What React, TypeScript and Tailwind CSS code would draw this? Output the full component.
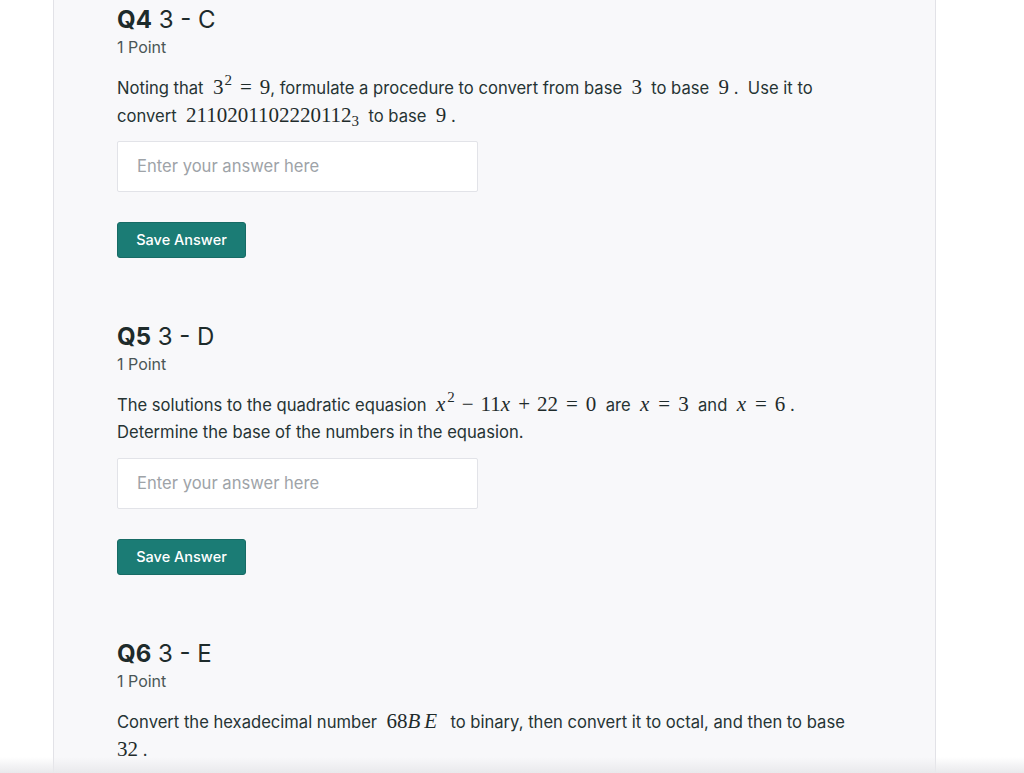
import React from "react";

const M = ({ children }: { children: React.ReactNode }) => (
  <span
    className="text-[21px] text-[#1f2b2b]"
    style={{ fontFamily: '"Liberation Serif", "DejaVu Serif", serif' }}
  >
    {children}
  </span>
);

const Rel = ({ children }: { children: React.ReactNode }) => (
  <span className="mx-[8px]">{children}</span>
);
const Bin = ({ children }: { children: React.ReactNode }) => (
  <span className="mx-[7px]">{children}</span>
);
const V = ({ children }: { children: React.ReactNode }) => (
  <i className="tracking-[1px]">{children}</i>
);

const Sup = ({ children }: { children: React.ReactNode }) => (
  <sup className="text-[15px] relative -top-[9px] ml-[1px]">{children}</sup>
);

function Question({
  num,
  title,
  children,
  last = false,
}: {
  num: string;
  title: string;
  children: React.ReactNode;
  last?: boolean;
}) {
  return (
    <section className="flex flex-col">
      <h2 className="text-[24px] leading-[30px] text-[#1e2b2b]">
        <span className="font-bold">{num}</span> {title}
      </h2>
      <div className="text-[16px] leading-[24px] text-[#4a5656]">1 Point</div>
      <div className="mt-[15px] h-[54px] text-[16.6px] leading-[27px] text-[#263434] whitespace-nowrap">{children}</div>
      <div className="mt-[13px] w-[361px] h-[51px] bg-white border border-[#e2e3e8] rounded-[2px] flex items-center pl-[19px] text-[16.6px] text-[#9ea3a8]">
        Enter your answer here
      </div>
      {!last && (
        <button className="mt-[30px] w-[129px] h-[36px] rounded-[3px] bg-[#1b7c75] border border-[#176b65] text-white text-[14.5px] font-medium">
          Save Answer
        </button>
      )}
    </section>
  );
}

export default function App() {
  return (
    <div
      className="relative h-[773px] w-[1024px] overflow-hidden bg-white"
      style={{ fontFamily: 'Inter, "Noto Sans", sans-serif' }}
    >
      <div className="ml-[53px] w-[883px] h-full bg-[#f8f8fa] border-x border-[#e2e2e7] pl-[63px] pt-[5px] flex flex-col gap-[64px]">
        <Question num="Q4" title="3 - C">
          Noting that&nbsp; <M>3<Sup>2</Sup><Rel>=</Rel>9</M>, formulate a procedure to
          convert from base&nbsp; <M>3</M>&nbsp; to base&nbsp; <M>9</M>&nbsp;. &nbsp;Use it to
          <br />
          convert&nbsp; <M>2110201102220112<sub className="text-[15px]">3</sub></M>&nbsp; to base&nbsp; <M>9</M>&nbsp;.
        </Question>
        <Question num="Q5" title="3 - D">
          The solutions to the quadratic equasion&nbsp; <M><V>x</V><Sup>2</Sup><Bin>−</Bin>11<V>x</V><Bin>+</Bin>22<Rel>=</Rel>0</M>&nbsp; are&nbsp;{" "}
          <M><V>x</V><Rel>=</Rel>3</M>&nbsp; and&nbsp; <M><V>x</V><Rel>=</Rel>6</M>&nbsp;.
          <br />
          Determine the base of the numbers in the equasion.
        </Question>
        <Question num="Q6" title="3 - E" last>
          Convert the hexadecimal number&nbsp; <M>68<i className="tracking-[4px]">BE</i></M>&nbsp; to binary, then convert it to octal, and then to base
          <br />
          <M>32</M>&nbsp;.
        </Question>
      </div>
      <div className="absolute left-0 right-0 bottom-0 h-[16px] bg-gradient-to-b from-transparent to-[#e9e9ec]" />
    </div>
  );
}
